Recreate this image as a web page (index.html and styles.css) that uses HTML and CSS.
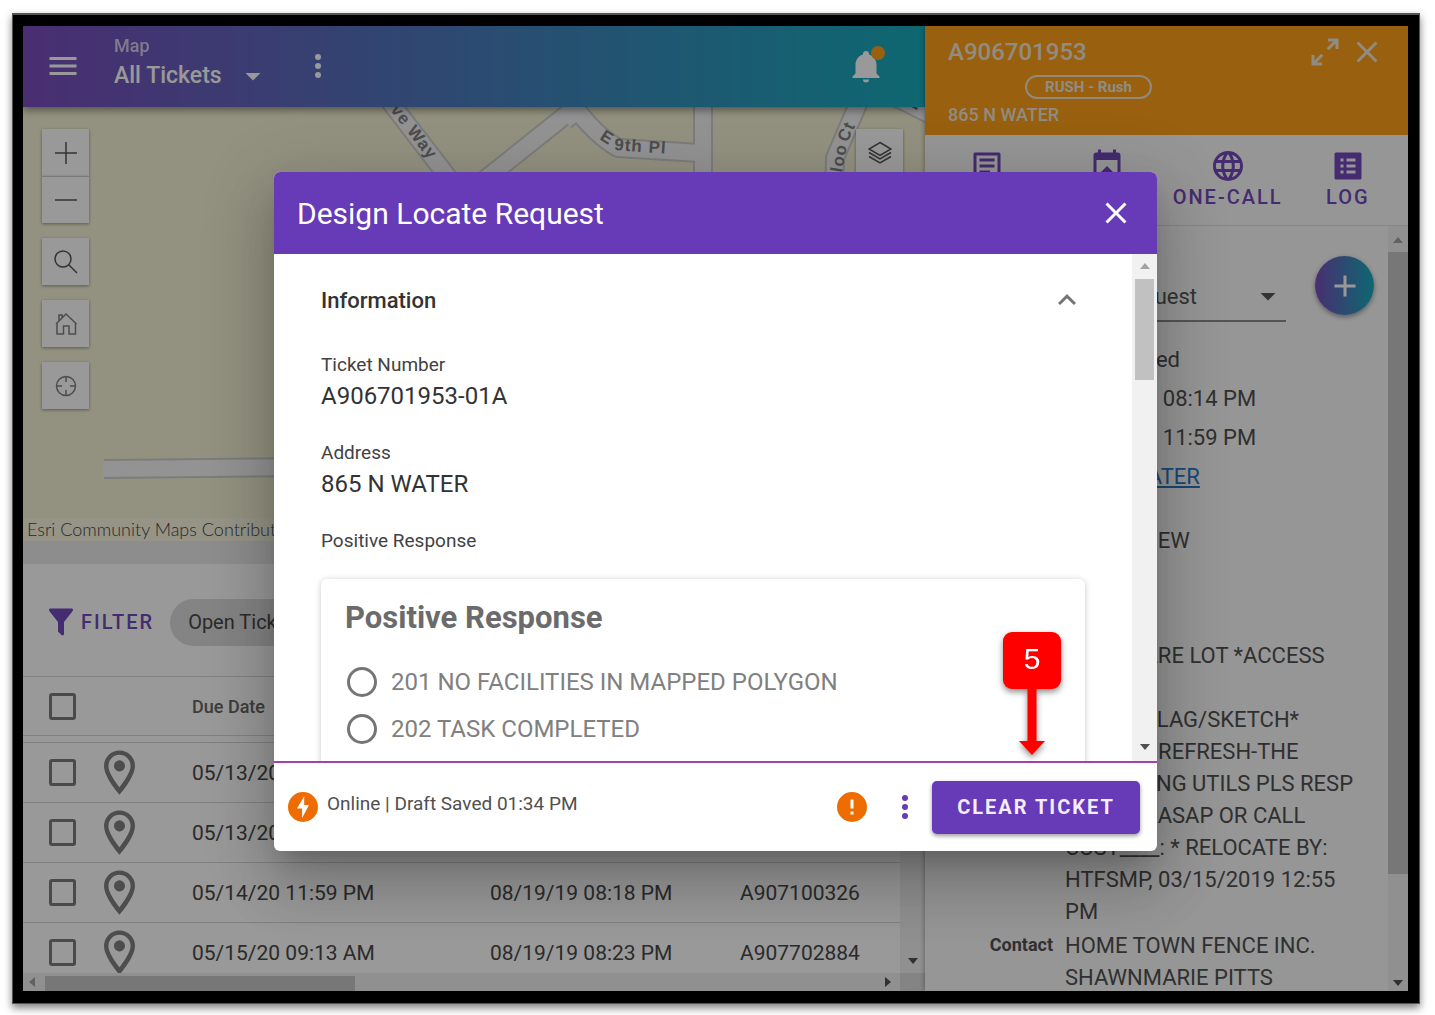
FILE: index.html
```html
<!DOCTYPE html>
<html lang="en">
<head>
<meta charset="utf-8">
<title>Design Locate Request</title>
<meta name="viewport" content="width=device-width, initial-scale=1">
<link rel="stylesheet" href="styles.css">
</head>
<body>
<svg class="sprite" aria-hidden="true">
  <symbol id="i-menu" viewBox="0 0 24 24"><path d="M3,6H21V8H3V6M3,11H21V13H3V11M3,16H21V18H3V16Z"/></symbol>
  <symbol id="i-dots" viewBox="0 0 24 24"><circle cx="12" cy="6" r="2"/><circle cx="12" cy="12" r="2"/><circle cx="12" cy="18" r="2"/></symbol>
  <symbol id="i-down" viewBox="0 0 24 24"><path d="M7,10L12,15L17,10H7Z"/></symbol>
  <symbol id="i-bell" viewBox="0 0 24 24"><path d="M21,19V20H3V19L5,17V11C5,7.9 7.03,5.17 10,4.29C10,4.19 10,4.1 10,4A2,2 0 0,1 12,2A2,2 0 0,1 14,4C14,4.1 14,4.19 14,4.29C16.97,5.17 19,7.9 19,11V17L21,19M14,21A2,2 0 0,1 12,23A2,2 0 0,1 10,21"/></symbol>
  <symbol id="i-close" viewBox="0 0 24 24"><path d="M19,6.41L17.59,5L12,10.59L6.41,5L5,6.41L10.59,12L5,17.59L6.41,19L12,13.41L17.59,19L19,17.59L13.41,12L19,6.41Z"/></symbol>
  <symbol id="i-expand" viewBox="0 0 24 24"><path d="M10,21V19H6.41L10.91,14.5L9.5,13.09L5,17.59V14H3V21H10M14.5,10.91L19,6.41V10H21V3H14V5H17.59L13.09,9.5L14.5,10.91Z"/></symbol>
  <symbol id="i-filter" viewBox="0 0 24 24"><path d="M14,12V19.88C14.04,20.18 13.94,20.5 13.71,20.71C13.32,21.1 12.69,21.1 12.3,20.71L10.29,18.7C10.06,18.47 9.96,18.16 10,17.87V12H9.97L4.21,4.62C3.87,4.19 3.95,3.56 4.38,3.22C4.57,3.08 4.78,3 5,3H19C19.22,3 19.43,3.08 19.62,3.22C20.05,3.56 20.13,4.19 19.79,4.62L14.03,12H14Z"/></symbol>
  <symbol id="i-pin" viewBox="0 0 24 24"><path d="M12,6.5A2.5,2.5 0 0,1 14.5,9A2.5,2.5 0 0,1 12,11.5A2.5,2.5 0 0,1 9.5,9A2.5,2.5 0 0,1 12,6.5M12,2A7,7 0 0,1 19,9C19,14.25 12,22 12,22C12,22 5,14.25 5,9A7,7 0 0,1 12,2M12,4A5,5 0 0,0 7,9C7,10 7,12 12,18.71C17,12 17,10 17,9A5,5 0 0,0 12,4Z"/></symbol>
  <symbol id="i-up" viewBox="0 0 24 24"><path d="M7.41,15.41L12,10.83L16.59,15.41L18,14L12,8L6,14L7.41,15.41Z"/></symbol>
  <symbol id="i-flash" viewBox="0 0 24 24"><path fill-rule="evenodd" d="M12,2A10,10 0 1,1 12,22A10,10 0 1,1 12,2M12.8,4.8L8,13H11.4V19.4L16,10.6H12.8Z"/></symbol>
  <symbol id="i-alert" viewBox="0 0 24 24"><path d="M13,13H11V7H13M13,17H11V15H13M12,2A10,10 0 0,0 2,12A10,10 0 0,0 12,22A10,10 0 0,0 22,12A10,10 0 0,0 12,2Z"/></symbol>
  <symbol id="i-plus" viewBox="0 0 24 24"><path d="M19,13H13V19H11V13H5V11H11V5H13V11H19V13Z"/></symbol>
  <symbol id="i-web" viewBox="0 0 24 24"><path d="M16.36,14C16.44,13.34 16.5,12.68 16.5,12C16.5,11.32 16.44,10.66 16.36,10H19.74C19.9,10.64 20,11.31 20,12C20,12.69 19.9,13.36 19.74,14M14.59,19.56C15.19,18.45 15.65,17.25 15.97,16H18.92C17.96,17.65 16.43,18.93 14.59,19.56M14.34,14H9.66C9.56,13.34 9.5,12.68 9.5,12C9.5,11.32 9.56,10.65 9.66,10H14.34C14.43,10.65 14.5,11.32 14.5,12C14.5,12.68 14.43,13.34 14.34,14M12,19.96C11.17,18.76 10.5,17.43 10.09,16H13.91C13.5,17.43 12.83,18.76 12,19.96M8,8H5.08C6.03,6.34 7.57,5.06 9.4,4.44C8.8,5.55 8.35,6.75 8,8M5.08,16H8C8.35,17.25 8.8,18.45 9.4,19.56C7.57,18.93 6.03,17.65 5.08,16M4.26,14C4.1,13.36 4,12.69 4,12C4,11.31 4.1,10.64 4.26,10H7.64C7.56,10.66 7.5,11.32 7.5,12C7.5,12.68 7.56,13.34 7.64,14M12,4.03C12.83,5.23 13.5,6.57 13.91,8H10.09C10.5,6.57 11.17,5.23 12,4.03M18.92,8H15.97C15.65,6.75 15.19,5.55 14.59,4.44C16.43,5.07 17.96,6.34 18.92,8M12,2C6.47,2 2,6.5 2,12A10,10 0 0,0 12,22A10,10 0 0,0 22,12A10,10 0 0,0 12,2Z"/></symbol>
  <symbol id="i-log" viewBox="0 0 24 24"><path fill-rule="evenodd" d="M4,3H20A1,1 0 0,1 21,4V20A1,1 0 0,1 20,21H4A1,1 0 0,1 3,20V4A1,1 0 0,1 4,3M7,7V9H9V7M11,7V9H17V7M7,11V13H9V11M11,11V13H17V11M7,15V17H9V15M11,15V17H17V15"/></symbol>
  <symbol id="i-doc" viewBox="0 0 24 24"><path fill-rule="evenodd" d="M4,3H20A1,1 0 0,1 21,4V20A1,1 0 0,1 20,21H4A1,1 0 0,1 3,20V4A1,1 0 0,1 4,3M5,5V19H19V5M7,7H17V9H7M7,11H17V13H7M7,15H14V17H7"/></symbol>
  <symbol id="i-cal" viewBox="0 0 24 24"><path fill-rule="evenodd" d="M6,1H8V3H16V1H18V3H19A2,2 0 0,1 21,5V19A2,2 0 0,1 19,21H5A2,2 0 0,1 3,19V5A2,2 0 0,1 5,3H6M5,8V19H19V8M12,12L16,16H8"/></symbol>
</svg>

<div class="frame">
<div class="app">
  <main class="main">
    <header class="topbar">
      <button class="icon-btn" aria-label="Menu"><svg class="icon"><use href="#i-menu"/></svg></button>
      <div class="view">
        <label class="view-label" for="view">Map</label>
        <div class="view-pick">
          <select id="view" class="view-select"><option>All Tickets</option></select>
          <svg class="icon"><use href="#i-down"/></svg>
        </div>
      </div>
      <button class="icon-btn" aria-label="More"><svg class="icon"><use href="#i-dots"/></svg></button>
      <button class="icon-btn bell" aria-label="Notifications"><svg class="icon"><use href="#i-bell"/></svg><span class="bell-dot"></span></button>
    </header>

    <section class="map" aria-label="Map">
      <svg class="roads" aria-hidden="true">
        <g class="road-edge">
          <path d="M361,-13L441,91"/><path d="M445,86L549,3M547,-6C560,12 575,30 595,41L677,46M542,14L560,-2"/><path d="M680,-10V100"/><path d="M838,-10L812,51L811,90"/><path d="M868,-12L920,14"/><path d="M81,362L400,359"/>
        </g>
        <g class="road-fill">
          <path d="M361,-13L441,91"/><path d="M445,86L549,3M547,-6C560,12 575,30 595,41L677,46M542,14L560,-2"/><path d="M680,-10V100"/><path d="M838,-10L812,51L811,90"/><path d="M868,-12L920,14"/><path d="M80,362L400,359"/>
        </g>
        <g class="road-name">
          <text transform="translate(367 3) rotate(52)">ve Way</text>
          <text transform="translate(576 32) rotate(32)">E</text>
          <text transform="translate(591 43) rotate(4)">9th Pl</text>
          <text transform="translate(819 66) rotate(-80)">loo</text>
          <text transform="translate(824 36) rotate(-64)">Ct</text>
          <text transform="translate(893 4) rotate(-60)">r</text>
        </g>
      </svg>
      <div class="map-tools">
        <div class="tool-group">
          <button class="tool" aria-label="Zoom in"><svg class="line-icon" viewBox="0 0 24 24"><path d="M1,12H23M12,1V23"/></svg></button>
          <button class="tool" aria-label="Zoom out"><svg class="line-icon" viewBox="0 0 24 24"><path d="M1,12H23"/></svg></button>
        </div>
        <button class="tool" aria-label="Search"><svg class="line-icon" viewBox="0 0 24 24"><circle cx="9" cy="9" r="8"/><path d="M14.500,14.500L23,23"/></svg></button>
        <button class="tool" aria-label="Home"><svg class="line-icon soft" viewBox="0 0 24 24"><path d="M3,11V22H9.500V14H15V22H21.500V11M2,12L12,2L22.500,12M5,9V3H8V6"/></svg></button>
        <button class="tool" aria-label="Locate"><svg class="line-icon soft" viewBox="0 0 24 24"><circle cx="12" cy="12" r="9.500"/><path d="M12,2V8M12,16V22M2,12H8M16,12H22"/></svg></button>
      </div>
      <button class="tool layers" aria-label="Layers"><svg class="line-icon" viewBox="0 0 24 24"><path d="M12,1.500L23,8L12,14.500L1,8ZM1,11.500L12,18L23,11.500M1,15.500L12,22L23,15.500"/></svg></button>
      <div class="credit">Esri Community Maps Contributors</div>
    </section>

    <div class="splitter"></div>

    <section class="tickets">
      <div class="filters">
        <button class="filter-btn"><svg class="icon"><use href="#i-filter"/></svg>FILTER</button>
        <span class="chip">Open Tickets</span>
      </div>
      <div class="grid-wrap">
        <div class="grid-view">
          <table class="grid">
            <colgroup><col class="c-check"><col class="c-pin"><col class="c-due"><col class="c-rec"><col></colgroup>
            <thead><tr><th><input type="checkbox" class="check" aria-label="Select all"></th><th></th><th>Due Date</th><th>Received</th><th>Ticket</th></tr></thead>
            <tbody>
              <tr class="gap-row"><td colspan="5"></td></tr>
              <tr><td><input type="checkbox" class="check" aria-label="Select ticket"></td><td><svg class="pin"><use href="#i-pin"/></svg></td><td>05/13/20</td><td></td><td></td></tr>
              <tr><td><input type="checkbox" class="check" aria-label="Select ticket"></td><td><svg class="pin"><use href="#i-pin"/></svg></td><td>05/13/20</td><td></td><td></td></tr>
              <tr><td><input type="checkbox" class="check" aria-label="Select ticket"></td><td><svg class="pin"><use href="#i-pin"/></svg></td><td>05/14/20 11:59 PM</td><td>08/19/19 08:18 PM</td><td>A907100326</td></tr>
              <tr><td><input type="checkbox" class="check" aria-label="Select ticket"></td><td><svg class="pin"><use href="#i-pin"/></svg></td><td>05/15/20 09:13 AM</td><td>08/19/19 08:23 PM</td><td>A907702884</td></tr>
            </tbody>
          </table>
        </div>
        <div class="bar-v"><i class="arrow-down"></i></div>
        <div class="bar-h"><i class="arrow-left"></i><span class="bar-h-thumb"></span><i class="arrow-right"></i></div>
        <div class="bar-corner"></div>
      </div>
    </section>
  </main>

  <aside class="detail">
    <header class="detail-head">
      <div class="detail-title">
        <h2>A906701953</h2>
        <button class="icon-btn" aria-label="Expand"><svg class="icon"><use href="#i-expand"/></svg></button>
        <button class="icon-btn" aria-label="Close"><svg class="icon"><use href="#i-close"/></svg></button>
      </div>
      <span class="rush">RUSH - Rush</span>
      <p class="detail-addr">865 N WATER</p>
    </header>
    <nav class="tabs">
      <button class="tab"><svg class="icon"><use href="#i-doc"/></svg>TICKET</button>
      <button class="tab"><svg class="icon"><use href="#i-cal"/></svg>VISITS</button>
      <button class="tab"><svg class="icon"><use href="#i-web"/></svg>ONE-CALL</button>
      <button class="tab"><svg class="icon"><use href="#i-log"/></svg>LOG</button>
    </nav>
    <div class="detail-scroll">
      <div class="detail-body">
        <div class="form-pick">
          <div class="form-field">
            <select class="form-select" aria-label="Form"><option>Design Locate Request</option></select>
            <svg class="icon"><use href="#i-down"/></svg>
          </div>
          <button class="fab" aria-label="Add"><svg class="icon"><use href="#i-plus"/></svg></button>
        </div>
        <dl class="facts">
          <div class="fact"><dt>Status</dt><dd>Unassigned</dd></div>
          <div class="fact"><dt>Received</dt><dd>08/12/19 08:14 PM</dd></div>
          <div class="fact"><dt>Due</dt><dd>05/14/20 11:59 PM</dd></div>
          <div class="fact"><dt>Address</dt><dd><a href="#">865 N WATER</a><br>&nbsp;<br>GRANDVIEW</dd></div>
          <div class="fact"><dt>&nbsp;</dt><dd></dd></div>
          <div class="fact"><dt>&nbsp;</dt><dd></dd></div>
          <div class="fact tight"><dt>Remarks</dt><dd>ON SQUARE LOT *ACCESS<br>&nbsp;<br>*MARK/FLAG/SKETCH*<br>*PLEASE REFRESH-THE<br>FOLLOWING UTILS PLS RESP<br>REMARK ASAP OR CALL<br>CUST____: * RELOCATE BY:<br>HTFSMP, 03/15/2019 12:55<br>PM</dd></div>
          <div class="fact tight"><dt>Contact</dt><dd>HOME TOWN FENCE INC.<br>SHAWNMARIE PITTS</dd></div>
        </dl>
      </div>
      <div class="bar-v side"><i class="arrow-up"></i><span class="side-thumb"></span><i class="arrow-down"></i></div>
    </div>
  </aside>

  <div class="backdrop">
    <div class="modal" role="dialog" aria-labelledby="modal-title">
      <header class="modal-head">
        <h1 id="modal-title">Design Locate Request</h1>
        <button class="icon-btn" aria-label="Close"><svg class="icon"><use href="#i-close"/></svg></button>
      </header>
      <div class="modal-scroll">
        <div class="modal-body">
          <div class="section-head">
            <h2>Information</h2>
            <button class="icon-btn" aria-label="Collapse"><svg class="icon"><use href="#i-up"/></svg></button>
          </div>
          <div class="info">
            <div><div class="info-label">Ticket Number</div><div class="info-value">A906701953-01A</div></div>
            <div><div class="info-label">Address</div><div class="info-value">865 N WATER</div></div>
            <div class="info-label">Positive Response</div>
          </div>
          <fieldset class="card">
            <legend class="card-title">Positive Response</legend>
            <label class="choice"><input type="radio" name="response">201 NO FACILITIES IN MAPPED POLYGON</label>
            <label class="choice"><input type="radio" name="response">202 TASK COMPLETED</label>
          </fieldset>
        </div>
        <div class="bar-v modal-bar"><i class="arrow-up"></i><span class="modal-thumb"></span><i class="arrow-down"></i></div>
      </div>
      <footer class="modal-foot">
        <svg class="icon warn"><use href="#i-flash"/></svg>
        <span class="status">Online | Draft Saved 01:34 PM</span>
        <svg class="icon warn"><use href="#i-alert"/></svg>
        <button class="icon-btn accent" aria-label="More actions"><svg class="icon"><use href="#i-dots"/></svg></button>
        <button class="clear-btn">CLEAR TICKET</button>
      </footer>
      <div class="callout"><span class="callout-num">5</span><svg class="callout-arrow" viewBox="0 0 26 66"><path d="M8.500,0H17.500V52H26L13,66L0,52H8.500Z"/></svg></div>
    </div>
  </div>
</div>
</div>
</body>
</html>
```
FILE: styles.css
```css
* { box-sizing: border-box; }

body {
  margin: 0;
  padding: 13px 15px 11px 12px;
  height: 100vh;
  background: #fff;
  color: #212121;
  font-family: Roboto, "Liberation Sans", sans-serif;
}

h1, h2, p, dl, dd { margin: 0; }

button, select {
  border: 0;
  padding: 0;
  background: none;
  color: inherit;
  font: inherit;
}

.sprite { position: absolute; width: 0; height: 0; }

.icon { display: block; flex: none; width: 36px; height: 36px; fill: currentColor; }
.icon-btn { flex: none; width: 36px; height: 36px; }

.frame {
  height: 100%;
  padding: 11px 11px 12px 10px;
  border: 1px solid #555;
  border-top-width: 2px;
  background: #000;
  box-shadow: 0 4px 8px rgba(0, 0, 0, .5);
}

.app {
  position: relative;
  display: grid;
  grid-template-columns: minmax(0, 1fr) 483px;
  height: 100%;
  overflow: hidden;
  background: #fff;
}

/* Left side */
.main {
  display: grid;
  grid-template-rows: 81px minmax(0, 434fr) 23px minmax(0, 427fr);
  min-width: 0;
  min-height: 0;
}

.topbar {
  position: relative;
  z-index: 1;
  display: flex;
  align-items: center;
  padding: 0 41px 2px 22px;
  background: linear-gradient(90deg, #7b4dbc, #17adbd);
  box-shadow: 0 3px 8px rgba(0, 0, 0, .45);
  color: #fff;
}
.view { margin: 0 29px 0 33px; font-weight: 500; }
.view-label { display: block; font-size: 18px; line-height: 20px; opacity: .7; }
.view-pick { display: flex; align-items: center; gap: 12px; height: 40px; }
.view-select { appearance: none; height: 32px; font-size: 23px; line-height: 32px; }
.bell { position: relative; margin-left: auto; }
.bell-dot {
  position: absolute;
  top: -2px;
  right: -1px;
  width: 14px;
  height: 14px;
  border-radius: 50%;
  background: #fda019;
}

.map { position: relative; overflow: hidden; background: #f6f4d5; }
.roads { display: block; width: 100%; height: 100%; }
.road-edge, .road-fill { fill: none; stroke-linejoin: round; }
.road-edge { stroke: #cfcfcb; stroke-width: 20; }
.road-fill { stroke: #f5f5f7; stroke-width: 16; }
.road-name { fill: #808080; font: bold 17px "Liberation Sans", Arial, sans-serif; letter-spacing: 1px; }

.map-tools {
  position: absolute;
  top: 22px;
  left: 19px;
  display: flex;
  flex-direction: column;
  gap: 15px;
}
.tool {
  display: grid;
  place-items: center;
  width: 47px;
  height: 47px;
  background: #fff;
  box-shadow: 0 1px 3px rgba(0, 0, 0, .4);
  color: #555;
}
.tool-group { display: grid; }
.tool-group .tool + .tool { border-top: 1px solid #ccc; }
.layers { position: absolute; top: 22px; right: 22px; }
.line-icon { width: 24px; height: 24px; fill: none; stroke: currentColor; stroke-width: 1.5; }
.soft { color: #808080; }
.credit {
  position: absolute;
  right: 0;
  bottom: 0;
  left: 0;
  padding-left: 4px;
  background: rgba(255, 255, 255, .3);
  color: #444;
  font: 300 18px/23px Lato, sans-serif;
}

.splitter { background: #ececec; }

.tickets { display: flex; flex-direction: column; min-height: 0; }
.filters {
  display: flex;
  flex: none;
  align-items: center;
  gap: 16px;
  height: 113px;
  padding: 4px 20px 0;
  border-bottom: 1px solid #d8d8d8;
}
.filter-btn {
  display: flex;
  align-items: center;
  gap: 2px;
  color: #7349ba;
  font-size: 20px;
  font-weight: 500;
  letter-spacing: 2px;
}
.chip {
  padding: 0 18px;
  border-radius: 24px;
  background: #dcdcdc;
  color: #484848;
  font-size: 20px;
  line-height: 47px;
}

.grid-wrap {
  display: grid;
  flex: 1;
  grid-template: minmax(0, 1fr) 18px / minmax(0, 1fr) 25px;
  min-height: 0;
}
.grid-view { overflow: hidden; }
.grid {
  width: 100%;
  table-layout: fixed;
  border-collapse: separate;
  border-spacing: 0;
  color: #484848;
  font-size: 21px;
}
.c-check { width: 70px; }
.c-pin { width: 99px; }
.c-due { width: 298px; }
.c-rec { width: 250px; }
.grid th, .grid td {
  height: 60px;
  padding: 0;
  border-bottom: 1px solid #d8d8d8;
  text-align: left;
}
.grid th { height: 59px; color: #666; font-size: 18px; font-weight: 500; }
.grid .gap-row td { height: 7px; }
.grid th:first-child, .grid td:first-child { padding-left: 26px; }
.pin { display: block; width: 53px; height: 53px; fill: #808080; }
.check {
  display: block;
  width: 27px;
  height: 27px;
  margin: 0;
  appearance: none;
  border: 3px solid #7c7c7c;
  border-radius: 3px;
}

/* Scroll bars */
.bar-v {
  display: flex;
  flex-direction: column;
  align-items: center;
  padding: 9px 0;
  background: #f1f1f1;
}
.bar-v .arrow-down { margin-top: auto; }
.bar-h { display: flex; align-items: center; gap: 10px; padding: 0 9px 0 6px; background: #f1f1f1; }
.bar-h-thumb { width: 36%; height: 15px; margin-top: 3px; background: #c6c6c6; }
.bar-corner { background: #dcdcdc; }
.arrow-up, .arrow-down, .arrow-left, .arrow-right { flex: none; border: 5px solid transparent; }
.arrow-up { border-top: 0; border-bottom: 6px solid #a3a3a3; }
.arrow-down { border-bottom: 0; border-top: 6px solid #505050; }
.arrow-left { border-left: 0; border-right: 6px solid #a3a3a3; }
.arrow-right { margin-left: auto; border-right: 0; border-left: 6px solid #505050; }

/* Ticket panel */
.detail {
  display: flex;
  flex-direction: column;
  min-height: 0;
  background: #fafafa;
  box-shadow: 0 0 5px rgba(0, 0, 0, .4);
  z-index: 1;
}
.detail-head { height: 109px; padding: 8px 23px 0; background: #fda019; color: #f2ead9; }
.detail-title { display: flex; align-items: center; gap: 6px; height: 36px; }
.detail-title h2 { flex: 1; font-size: 24px; font-weight: 500; }
.rush {
  display: block;
  width: 127px;
  height: 24px;
  margin: 5px 0 5px 77px;
  border: 2px solid #f2e6cc;
  border-radius: 12px;
  font-size: 15px;
  font-weight: 700;
  line-height: 20px;
  text-align: center;
}
.detail-addr { font-size: 18px; font-weight: 500; line-height: 22px; }

.tabs {
  display: grid;
  flex: none;
  grid-template-columns: repeat(4, minmax(0, 121px));
  height: 91px;
  padding: 13px 0 0 2px;
  border-bottom: 1px solid #e0e0e0;
}
.tab {
  display: flex;
  flex-direction: column;
  align-items: center;
  gap: 1px;
  color: #7349ba;
  font-size: 20px;
  font-weight: 500;
  line-height: 24px;
  letter-spacing: 2px;
}

.detail-scroll { display: grid; flex: 1; grid-template-columns: minmax(0, 1fr) 20px; min-height: 0; }
.detail-body { min-height: 0; overflow: hidden; }
.form-pick { display: flex; gap: 29px; height: 118px; padding: 30px 14px 0 43px; }
.form-field {
  display: flex;
  flex: 1;
  align-items: center;
  height: 66px;
  padding-top: 16px;
  border-bottom: 2px solid #8c8c8c;
  color: #585858;
}
.form-select { flex: 1; padding-left: 4px; appearance: none; font-size: 22px; }
.fab {
  display: grid;
  flex: none;
  place-items: center;
  width: 59px;
  height: 59px;
  border-radius: 50%;
  background: linear-gradient(90deg, #7b4dbc, #17adbd);
  box-shadow: 0 2px 5px rgba(0, 0, 0, .4);
  color: #fff;
}
.facts { color: #505050; font-size: 22px; line-height: 32px; }
.fact { display: grid; grid-template-columns: 128px minmax(0, 1fr); gap: 12px; padding-bottom: 7px; }
.fact.tight { padding: 2px 0 0; }
.fact dt { font-size: 18px; font-weight: 700; line-height: 30px; text-align: right; }
.fact dd { white-space: nowrap; }
.fact a { color: #2b78c4; }
.side { padding: 11px 0 5px; }
.side-thumb { width: 100%; height: 83%; margin-top: 9px; background: #c6c6c6; }

/* Dialog */
.backdrop {
  position: absolute;
  inset: 0;
  z-index: 2;
  padding: 146px 251px 140px;
  background: rgba(0, 0, 0, .4);
}
.modal {
  position: relative;
  display: flex;
  flex-direction: column;
  height: 100%;
  border-radius: 6px;
  background: #fff;
  box-shadow: 0 16px 22px -10px rgba(0, 0, 0, .2), 0 36px 57px 4px rgba(0, 0, 0, .14), 0 14px 69px 12px rgba(0, 0, 0, .12);
}
.modal-head {
  display: flex;
  flex: none;
  align-items: center;
  justify-content: space-between;
  height: 82px;
  padding: 0 23px;
  border-radius: 6px 6px 0 0;
  background: #673ab7;
  color: #fff;
}
.modal-head h1 { font-size: 30px; font-weight: 400; }
.modal-scroll { display: grid; flex: 1; grid-template-columns: minmax(0, 1fr) 25px; min-height: 0; }
.modal-body { padding: 28px 47px 0; overflow: hidden; }
.section-head { display: flex; align-items: center; justify-content: space-between; height: 36px; color: #333; }
.section-head h2 { font-size: 22px; font-weight: 500; }
.section-head .icon { fill: #757575; }
.info { display: grid; gap: 25px; padding: 34px 0 26px; }
.info-label { font-size: 19px; line-height: 25px; color: #424242; }
.info-value { font-size: 24px; line-height: 38px; color: #333; }
.card {
  display: grid;
  gap: 11px;
  height: 300px;
  margin: 0;
  padding: 18px 24px;
  align-content: start;
  border: 0;
  border-radius: 6px;
  box-shadow: 0 1px 6px rgba(0, 0, 0, .22);
  color: #808080;
}
.card-title { float: left; padding: 0; margin-bottom: 14px; font-size: 31px; font-weight: 700; line-height: 42px; color: #6b6b6b; }
.choice { display: flex; align-items: center; gap: 14px; height: 36px; font-size: 24px; }
.choice input {
  width: 30px;
  height: 30px;
  margin: 0 0 0 2px;
  appearance: none;
  border: 3px solid #757575;
  border-radius: 50%;
}
.modal-bar { padding-bottom: 11px; }
.modal-thumb { width: 19px; height: 101px; margin-top: 10px; background: #c1c1c1; }
.modal-foot {
  display: flex;
  flex: none;
  align-items: center;
  height: 90px;
  padding: 0 17px 0 11px;
  border-top: 2px solid #a83fae;
}
.warn { fill: #ef6c00; }
.status { margin: 0 auto 7px 6px; font-size: 19px; color: #505050; }
.accent { margin: 0 9px 0 17px; color: #673ab7; }
.clear-btn {
  width: 208px;
  height: 53px;
  border-radius: 5px;
  background: #673ab7;
  box-shadow: 0 2px 4px rgba(0, 0, 0, .4);
  color: #f4edff;
  font-size: 20px;
  font-weight: 700;
  letter-spacing: 2px;
}

.callout {
  position: absolute;
  right: 96px;
  bottom: 96px;
  display: flex;
  flex-direction: column;
  align-items: center;
  filter: drop-shadow(0 3px 3px rgba(0, 0, 0, .45));
}
.callout-num {
  width: 58px;
  height: 57px;
  border-radius: 9px;
  background: #f00;
  color: #fff;
  font: 30px/54px "Liberation Sans", Arial, sans-serif;
  text-align: center;
}
.callout-arrow { width: 26px; height: 66px; fill: #f00; }
```
